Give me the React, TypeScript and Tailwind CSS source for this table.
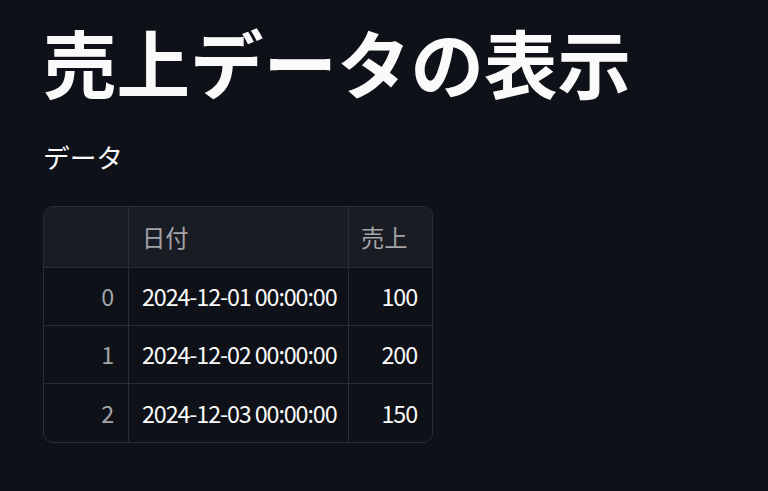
const ROWS = [
  { idx: 0, date: '2024-12-01 00:00:00', sales: 100 },
  { idx: 1, date: '2024-12-02 00:00:00', sales: 200 },
  { idx: 2, date: '2024-12-03 00:00:00', sales: 150 },
];

const font = { fontFamily: '"Noto Sans CJK JP", "Noto Sans", sans-serif' };

export default function App() {
  return (
    <div className="w-[768px] h-[491px] overflow-hidden bg-[#0e1117] text-[#fafafa]" style={font}>
      <div className="pl-[43px] pt-[15px]">
        <h1 className="text-[73.5px] font-bold leading-[92px]">売上データの表示</h1>
        <p className="mt-[30px] text-[26.7px] leading-[40px]">データ</p>

        <div className="mt-[29px] w-[390px] rounded-[10px] border border-[#2b2d35] overflow-hidden text-[23.3px] whitespace-nowrap">
          <div className="grid grid-cols-[85px_220px_83px] h-[61px] bg-[#1a1c24] border-b border-[#2b2d35] text-[#a3a4a8]">
            <div className="border-r border-[#2b2d35]" />
            <div className="border-r border-[#2b2d35] flex items-center pl-[13px]">日付</div>
            <div className="flex items-center pl-[12px]">売上</div>
          </div>
          {ROWS.map((r, i) => (
            <div
              key={r.idx}
              className={`grid grid-cols-[85px_220px_83px] h-[58px] tracking-[-1.1px] ${i < ROWS.length - 1 ? 'border-b border-[#2b2d35]' : ''}`}
            >
              <div className="border-r border-[#2b2d35] flex items-center justify-end pr-[15px] text-[#a3a4a8]">{r.idx}</div>
              <div className="border-r border-[#2b2d35] flex items-center pl-[13px]">{r.date}</div>
              <div className="flex items-center justify-end pr-[15px]">{r.sales}</div>
            </div>
          ))}
        </div>
      </div>
    </div>
  );
}
